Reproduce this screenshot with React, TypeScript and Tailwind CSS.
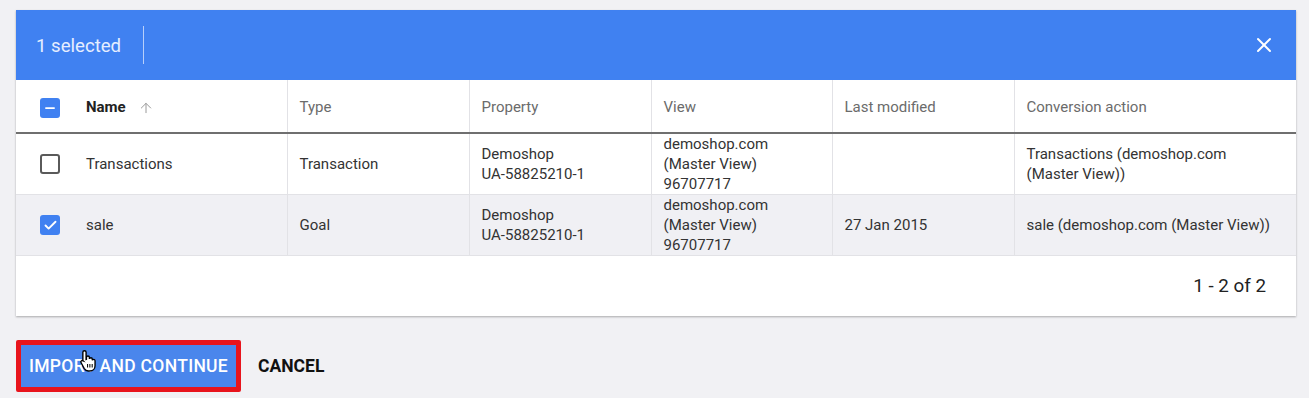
import { X, ArrowUp, Check, Minus } from "lucide-react";

type Row = {
  name: string;
  type: string;
  property: string[];
  view: string[];
  modified: string;
  action: string[];
  checked: boolean;
};

const rows: Row[] = [
  {
    name: "Transactions",
    type: "Transaction",
    property: ["Demoshop", "UA-58825210-1"],
    view: ["demoshop.com", "(Master View)", "96707717"],
    modified: "",
    action: ["Transactions (demoshop.com", "(Master View))"],
    checked: false,
  },
  {
    name: "sale",
    type: "Goal",
    property: ["Demoshop", "UA-58825210-1"],
    view: ["demoshop.com", "(Master View)", "96707717"],
    modified: "27 Jan 2015",
    action: ["sale (demoshop.com (Master View))"],
    checked: true,
  },
];

function HandCursor() {
  return (
    <svg width="19" height="23" viewBox="0 0 16 20" className="absolute left-[58px] top-[4px]">
      <path
        d="M4.5 1.5c.8 0 1.4.6 1.4 1.4v6.2l.3-.1V7.4c0-.8.6-1.3 1.3-1.3s1.3.6 1.3 1.3v1.2c.2-.7.7-1 1.3-1 .7 0 1.2.6 1.2 1.3v.9c.2-.5.7-.8 1.2-.8.7 0 1.2.6 1.2 1.3v4.2c0 2.6-2 4.6-4.6 4.6H7.8c-1.5 0-2.7-.8-3.5-2L1.6 12c-.4-.6-.3-1.4.3-1.8.6-.4 1.3-.3 1.8.3l-.6-.2V2.9c0-.8.6-1.4 1.4-1.4z"
        fill="#fff"
        stroke="#000"
        strokeWidth="1.2"
      />
      <path d="M7.2 13v3M9.2 13v3M11.2 13v3" stroke="#000" strokeWidth="0.9" />
    </svg>
  );
}

export default function App() {
  const cell = "border-r border-[#e2e2e6] pl-[12px] pr-2 align-middle";
  return (
    <div className="w-[1309px] h-[398px] bg-[#f1f1f4] pt-[10px] pl-[16px] font-['Roboto',sans-serif] overflow-hidden">
      {/* Card */}
      <div className="w-[1280px] bg-white shadow-[0_1px_2px_rgba(0,0,0,0.3)]">
        {/* Selection bar */}
        <div className="h-[70px] bg-[#4081f1] flex items-center pl-[20px] pr-[20px]">
          <span className="pt-[3px] text-[18.6px] text-[#e6eeff] pr-[22px]">1 selected</span>
          <div className="w-px h-[38px] bg-[#b8cffa]" />
          <div className="flex-1" />
          <X className="w-[24px] h-[24px] text-white" strokeWidth={2} />
        </div>

        <table className="w-full border-collapse table-fixed text-[15px]">
          <colgroup>
            <col className="w-[271px]" />
            <col className="w-[182px]" />
            <col className="w-[182px]" />
            <col className="w-[181px]" />
            <col className="w-[182px]" />
            <col />
          </colgroup>
          <thead>
            <tr className="h-[53px] border-b-2 border-[#6f6f6f] text-left text-[#6b6b6b]">
              <th className={`${cell} pl-[24px] pt-[3px] font-normal`}>
                <div className="flex items-center">
                  <span className="w-[20px] h-[20px] rounded-[3px] bg-[#4081f1] flex items-center justify-center">
                    <Minus className="w-[14px] h-[14px] text-white" strokeWidth={3} />
                  </span>
                  <span className="ml-[26px] font-bold text-[#222]">Name</span>
                  <ArrowUp className="ml-[12px] w-[16px] h-[16px] text-[#9a9a9a]" strokeWidth={1.5} />
                </div>
              </th>
              <th className={`${cell} pt-[3px] font-normal`}>Type</th>
              <th className={`${cell} pt-[3px] font-normal`}>Property</th>
              <th className={`${cell} pt-[3px] font-normal`}>View</th>
              <th className={`${cell} pt-[3px] font-normal`}>Last modified</th>
              <th className="pl-[12px] pt-[3px] font-normal">Conversion action</th>
            </tr>
          </thead>
          <tbody className="text-[#333] leading-[20px]">
            {rows.map((r) => (
              <tr
                key={r.name}
                className={`h-[61px] border-b border-[#e2e2e6] ${r.checked ? "bg-[#f0f0f4]" : "bg-white"}`}
              >
                <td className={`${cell} pl-[24px]`}>
                  <div className="flex items-center">
                    {r.checked ? (
                      <span className="w-[20px] h-[20px] rounded-[3px] bg-[#4081f1] flex items-center justify-center">
                        <Check className="w-[15px] h-[15px] text-white" strokeWidth={3} />
                      </span>
                    ) : (
                      <span className="w-[20px] h-[20px] rounded-[3px] border-2 border-[#5a5a5a] bg-white" />
                    )}
                    <span className="ml-[26px]">{r.name}</span>
                  </div>
                </td>
                <td className={cell}>{r.type}</td>
                <td className={cell}>
                  {r.property.map((l) => (
                    <div key={l}>{l}</div>
                  ))}
                </td>
                <td className={cell}>
                  {r.view.map((l) => (
                    <div key={l}>{l}</div>
                  ))}
                </td>
                <td className={cell}>{r.modified}</td>
                <td className="pl-[12px] pr-2 align-middle">
                  {r.action.map((l) => (
                    <div key={l}>{l}</div>
                  ))}
                </td>
              </tr>
            ))}
          </tbody>
        </table>

        <div className="h-[60px] flex items-center justify-end pr-[30px] text-[18.8px] text-[#222]">
          1 - 2 of 2
        </div>
      </div>

      {/* Actions */}
      <div className="mt-[24px] flex items-center">
        <div className="relative border-[5px] border-[#e8141c] rounded-[2px]">
          <button className="h-[42px] px-[8px] bg-[#4a86ec] text-white text-[17.5px] font-medium tracking-[0.3px]">
            IMPORT AND CONTINUE
          </button>
          <HandCursor />
        </div>
        <button className="ml-[12px] px-[5px] text-[17.5px] font-bold text-[#111]">CANCEL</button>
      </div>
    </div>
  );
}
